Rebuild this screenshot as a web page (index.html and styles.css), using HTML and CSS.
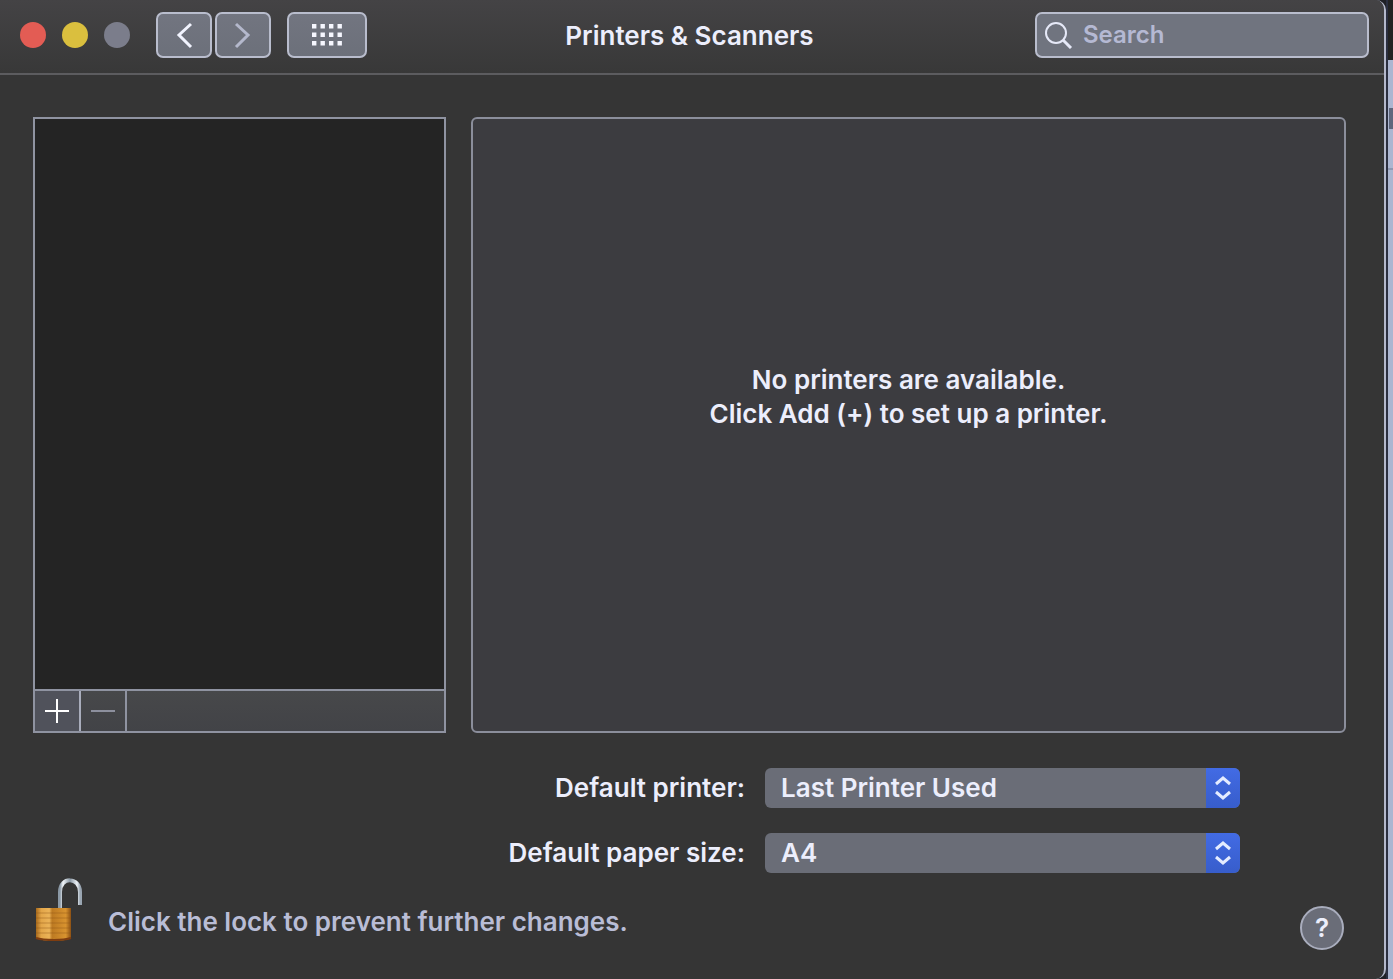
FILE: index.html
```
<!DOCTYPE html>
<html lang="en">
<head>
  <meta charset="UTF-8" />
  <meta name="viewport" content="width=device-width, initial-scale=1.0"/>
  <title>Printers &amp; Scanners</title>
  <link rel="stylesheet" href="styles.css">
</head>
<body>

  <div class="window">
    <!-- Toolbar -->
    <header class="toolbar">
      <div class="toolbar-left">
        <div class="lights">
          <button type="button" class="light close" aria-label="Close"></button>
          <button type="button" class="light minimize" aria-label="Minimize"></button>
          <button type="button" class="light zoom" aria-label="Zoom" disabled></button>
        </div>
        <div class="nav">
          <button type="button" class="tool-btn" aria-label="Back">
            <svg width="18" height="28" viewBox="0 0 18 28"><path d="M16 3 L4 14 L16 26" fill="none" stroke="#f2f4ff" stroke-width="3"/></svg>
          </button>
          <button type="button" class="tool-btn" aria-label="Forward">
            <svg width="18" height="28" viewBox="0 0 18 28"><path d="M2 3 L14 14 L2 26" fill="none" stroke="#b4b8cc" stroke-width="3"/></svg>
          </button>
        </div>
        <button type="button" class="tool-btn show-all" aria-label="Show All">
          <svg width="30" height="22" viewBox="0 0 30 22" fill="#f6f7ff">
            <path d="M0 0h4.400v4.400h-4.400z M8.500 0h4.400v4.400h-4.400z M17 0h4.400v4.400h-4.400z M25.500 0h4.400v4.400h-4.400z"/>
            <path d="M0 8.500h4.400v4.400h-4.400z M8.500 8.500h4.400v4.400h-4.400z M17 8.500h4.400v4.400h-4.400z M25.500 8.500h4.400v4.400h-4.400z"/>
            <path d="M0 17h4.400v4.400h-4.400z M8.500 17h4.400v4.400h-4.400z M17 17h4.400v4.400h-4.400z M25.500 17h4.400v4.400h-4.400z"/>
          </svg>
        </button>
      </div>
      <h1>Printers &amp; Scanners</h1>
      <div class="search">
        <svg width="28" height="28" viewBox="0 0 28 28" fill="none" stroke="#e6e9f8">
          <circle cx="11" cy="12" r="10" stroke-width="2"/>
          <path d="M18 19 L26 27" stroke-width="3"/>
        </svg>
        <input type="search" placeholder="Search" aria-label="Search">
      </div>
    </header>

    <main class="content">
      <div class="panels">
        <section class="printers" aria-label="Printers">
          <div class="printer-list"></div>
          <div class="list-actions">
            <button type="button" class="add" aria-label="Add printer">
              <svg width="24" height="24" viewBox="0 0 24 24"><path d="M0 12h24M12 0v24" stroke="#ffffff" stroke-width="2"/></svg>
            </button>
            <button type="button" aria-label="Remove printer" disabled>
              <svg width="24" height="24" viewBox="0 0 24 24"><path d="M0 12h24" stroke="#8d909e" stroke-width="2"/></svg>
            </button>
          </div>
        </section>
        <section class="details">
          <p>No printers are available.<br>Click Add (+) to set up a printer.</p>
        </section>
      </div>

      <!-- Defaults -->
      <form class="defaults">
        <label for="printer">Default printer:</label>
        <div class="popup">
          <select id="printer" name="printer">
            <option>Last Printer Used</option>
          </select>
          <span class="arrows">
            <svg width="16" height="24" viewBox="0 0 16 24"><path d="M1 8 L8 2 L15 8 M1 16 L8 22 L15 16" fill="none" stroke="#e4ecff" stroke-width="3"/></svg>
          </span>
        </div>

        <label for="paper">Default paper size:</label>
        <div class="popup">
          <select id="paper" name="paper">
            <option>A4</option>
            <option>A3</option>
            <option>US Letter</option>
          </select>
          <span class="arrows">
            <svg width="16" height="24" viewBox="0 0 16 24"><path d="M1 8 L8 2 L15 8 M1 16 L8 22 L15 16" fill="none" stroke="#e4ecff" stroke-width="3"/></svg>
          </span>
        </div>
      </form>

      <footer class="bottom">
        <button type="button" class="lock">
          <svg width="50" height="64" viewBox="0 0 50 64">
            <defs>
              <linearGradient id="brass">
                <stop offset="0" stop-color="#a86a1c"/>
                <stop offset="0.15" stop-color="#e2a548"/>
                <stop offset="0.38" stop-color="#ebb358"/>
                <stop offset="0.46" stop-color="#bd7a22"/>
                <stop offset="0.85" stop-color="#d8932f"/>
                <stop offset="1" stop-color="#8c5013"/>
              </linearGradient>
              <linearGradient id="steel">
                <stop offset="0" stop-color="#8b99a6"/>
                <stop offset="0.15" stop-color="#f2f6fa"/>
                <stop offset="0.5" stop-color="#8b99a6"/>
                <stop offset="0.85" stop-color="#eef3f8"/>
                <stop offset="1" stop-color="#9aa6b2"/>
              </linearGradient>
            </defs>
            <path d="M27 31 V14 C27 -2 47 -1 47 14 V27" fill="none" stroke="url(#steel)" stroke-width="4"/>
            <path d="M3 30h35v30q-6 3 -17 3q-12 0 -18 -3z" fill="url(#brass)"/>
            <path d="M3 35h35M3 40h35M3 45h35M3 50h35M3 55h35" stroke="#8e5716" stroke-opacity="0.45"/>
            <path d="M3 60q6 2 18 2q11 0 17 -2" fill="none" stroke="#7e3d10" stroke-width="2"/>
          </svg>
          <span>Click the lock to prevent further changes.</span>
        </button>
        <button type="button" class="help" aria-label="Help">?</button>
      </footer>
    </main>
  </div>

  <!-- Sliver of the window behind -->
  <div class="behind">
    <div class="behind-bar"></div>
    <div class="behind-row"><span></span></div>
  </div>

</body>
</html>
```
FILE: styles.css
```
* {
  box-sizing: border-box;
}

body {
  display: flex;
  min-height: 100vh;
  margin: 0;
  background: #1f2025;
  color: #eceefc;
  font-family: Inter, "Liberation Sans", sans-serif;
  font-size: 26px;
  font-weight: 600;
  line-height: 34px;
}

button, input, select {
  margin: 0;
  padding: 0;
  border: none;
  color: inherit;
  font: inherit;
}

.window {
  flex: 1;
  display: flex;
  flex-direction: column;
  background: #353535;
  border-right: 2px solid #b4b8cb;
  border-radius: 0 10px 10px 0;
  overflow: hidden;
}

.toolbar {
  display: grid;
  grid-template-columns: 1fr auto 1fr;
  align-items: center;
  padding: 12px 15px 15px 20px;
  background: linear-gradient(#444345, #383838);
  border-bottom: 2px solid #5c5c5f;
}

.toolbar-left {
  display: flex;
  align-items: center;
  gap: 16px;
}

.lights {
  display: flex;
  gap: 16px;
  margin-right: 10px;
}

.light {
  width: 26px;
  height: 26px;
  border-radius: 50%;
}

.close {
  background: #e35c54;
}

.minimize {
  background: #dabf3e;
}

.zoom {
  background: #7b7d8b;
}

.nav {
  display: flex;
  gap: 3px;
}

.tool-btn {
  display: flex;
  align-items: center;
  justify-content: center;
  width: 56px;
  height: 46px;
  background: linear-gradient(#727580, #6c707a);
  border: 2px solid #b9bdcd;
  border-radius: 7px;
}

.show-all {
  width: 80px;
}

h1 {
  margin: 2px 10px 0 0;
  font-size: 26px;
  font-weight: 600;
}

.search {
  display: flex;
  align-items: center;
  justify-self: end;
  gap: 10px;
  width: 334px;
  height: 46px;
  padding: 0 8px;
  background: #70747f;
  border: 2px solid #b9bdcd;
  border-radius: 7px;
}

.search input {
  flex: 1;
  min-width: 0;
  background: none;
  outline: none;
  font-size: 24px;
}

.search input::placeholder {
  color: #b5b9d3;
  opacity: 1;
}

.content {
  flex: 1;
  display: flex;
  flex-direction: column;
  padding: 42px 38px 29px 33px;
}

.panels {
  flex: 1;
  display: grid;
  grid-template-columns: 413px 1fr;
  gap: 25px;
  min-height: 300px;
}

.printers {
  display: flex;
  flex-direction: column;
  border: 2px solid #8f93a1;
}

.printer-list {
  flex: 1;
  background: #242424;
}

.list-actions {
  display: flex;
  height: 42px;
  background: linear-gradient(#47484a, #424347);
  border-top: 2px solid #8f93a1;
}

.list-actions button {
  display: flex;
  align-items: center;
  justify-content: center;
  width: 46px;
  background: none;
  border-right: 2px solid #8f93a1;
}

.list-actions .add {
  background: #50525b;
  border-right-color: #a9adbc;
}

.details {
  display: flex;
  justify-content: center;
  background: #3c3c40;
  border: 2px solid #8b8e9b;
  border-radius: 6px;
}

.details p {
  margin: auto;
  padding-bottom: 56px;
  text-align: center;
}

.defaults {
  display: grid;
  grid-template-columns: 1fr 475px;
  align-items: center;
  gap: 25px 20px;
  margin: 35px 106px 5px 0;
}

.defaults label {
  text-align: right;
}

.popup {
  position: relative;
  height: 40px;
}

.popup select {
  width: 100%;
  height: 40px;
  padding: 0 50px 0 16px;
  appearance: none;
  background: #6a6d77;
  border-radius: 6px;
}

.arrows {
  position: absolute;
  top: 0;
  right: 0;
  display: flex;
  align-items: center;
  justify-content: center;
  width: 34px;
  height: 40px;
  background: linear-gradient(#426be4, #375dcb);
  border-radius: 0 6px 6px 0;
  pointer-events: none;
}

.bottom {
  display: flex;
  align-items: flex-end;
  justify-content: space-between;
}

.lock {
  display: flex;
  align-items: flex-end;
  gap: 25px;
  margin-bottom: 8px;
  background: none;
  color: #b9bdd6;
}

.lock span {
  line-height: 40px;
}

.help {
  width: 44px;
  height: 44px;
  margin-right: 2px;
  background: #6a6d78;
  border: 2px solid #a9adbd;
  border-radius: 50%;
}

.behind {
  width: 7px;
  background: #acb6d1;
  border-left: 2px solid #2b2f40;
}

.behind-bar {
  height: 60px;
  background: #232323;
}

.behind-row {
  height: 110px;
  padding-top: 48px;
  border-bottom: 2px solid #8f99b3;
}

.behind-row span {
  display: block;
  width: 4px;
  height: 21px;
  margin-left: 1px;
  background: #5f677d;
}
```
